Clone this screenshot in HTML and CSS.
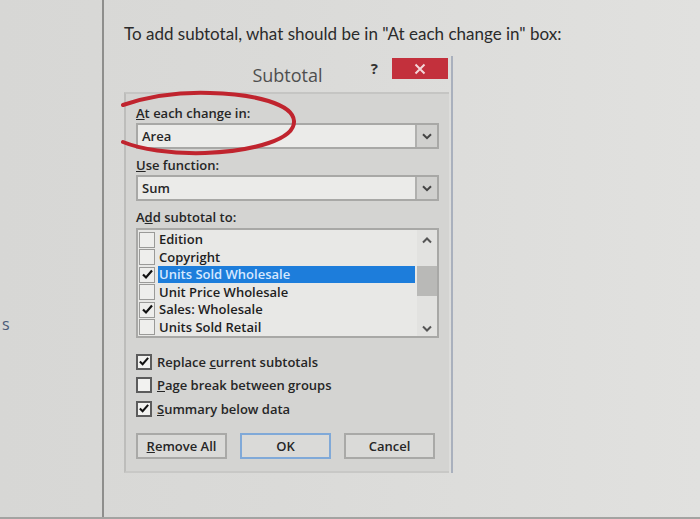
FILE: index.html
```html
<!DOCTYPE html>
<html>
<head>
<meta charset="utf-8">
<link rel="stylesheet" href="styles.css">
</head>
<body>
<div class="page">
  <div class="leftcol"><span class="s-letter">s</span></div>
  <div class="divider"></div>
  <div class="main">
    <p class="question">To add subtotal, what should be in "At each change in" box:</p>
    <div class="dialog">
      <div class="titlebar">
        <div></div>
        <div class="title">Subtotal</div>
        <div class="tb-right">
          <span class="help">?</span>
          <span class="close">
            <svg width="12" height="12" viewBox="0 0 12 12"><path d="M1.5 1.5 L10.5 10.5 M10.5 1.5 L1.5 10.5" stroke="#f4d6d8" stroke-width="2"/></svg>
          </span>
        </div>
      </div>
      <div class="panel">
        <div class="label"><u>A</u>t each change in:</div>
        <div class="combo">
          <span class="combo-text">Area</span>
          <span class="combo-btn"><svg width="10" height="7" viewBox="0 0 10 7"><path d="M1 1.2 L5 5.2 L9 1.2" fill="none" stroke="#444" stroke-width="2"/></svg></span>
        </div>
        <div class="label"><u>U</u>se function:</div>
        <div class="combo">
          <span class="combo-text">Sum</span>
          <span class="combo-btn"><svg width="10" height="7" viewBox="0 0 10 7"><path d="M1 1.2 L5 5.2 L9 1.2" fill="none" stroke="#444" stroke-width="2"/></svg></span>
        </div>
        <div class="label">A<u>d</u>d subtotal to:</div>
        <div class="listbox">
          <div class="list-items">
            <div class="item"><span class="lcb"></span><span class="itext">Edition</span></div>
            <div class="item"><span class="lcb"></span><span class="itext">Copyright</span></div>
            <div class="item sel"><span class="lcb"><svg width="13" height="11" viewBox="0 0 13 11"><path d="M2 5.5 L5 8.5 L11 1.5" fill="none" stroke="#111" stroke-width="2.2"/></svg></span><span class="itext">Units Sold Wholesale</span></div>
            <div class="item"><span class="lcb"></span><span class="itext">Unit Price Wholesale</span></div>
            <div class="item"><span class="lcb"><svg width="13" height="11" viewBox="0 0 13 11"><path d="M2 5.5 L5 8.5 L11 1.5" fill="none" stroke="#111" stroke-width="2.2"/></svg></span><span class="itext">Sales: Wholesale</span></div>
            <div class="item"><span class="lcb"></span><span class="itext">Units Sold Retail</span></div>
          </div>
          <div class="scrollbar">
            <svg class="arrow" width="10" height="7" viewBox="0 0 10 7"><path d="M1 5.5 L5 1.5 L9 5.5" fill="none" stroke="#555" stroke-width="2"/></svg>
            <div class="track"><div class="thumb"></div></div>
            <svg class="arrow" width="10" height="7" viewBox="0 0 10 7"><path d="M1 1.5 L5 5.5 L9 1.5" fill="none" stroke="#555" stroke-width="2"/></svg>
          </div>
        </div>
        <div class="options">
          <div class="opt"><span class="cb"><svg width="13" height="11" viewBox="0 0 13 11"><path d="M2 5.5 L5 8.5 L11 1.5" fill="none" stroke="#111" stroke-width="2.2"/></svg></span><span>Replace <u>c</u>urrent subtotals</span></div>
          <div class="opt"><span class="cb"></span><span><u>P</u>age break between groups</span></div>
          <div class="opt"><span class="cb"><svg width="13" height="11" viewBox="0 0 13 11"><path d="M2 5.5 L5 8.5 L11 1.5" fill="none" stroke="#111" stroke-width="2.2"/></svg></span><span><u>S</u>ummary below data</span></div>
        </div>
        <div class="buttons">
          <button class="btn"><u>R</u>emove All</button>
          <button class="btn ok">OK</button>
          <button class="btn">Cancel</button>
        </div>
      </div>
    </div>
  </div>
  <svg class="ink" width="700" height="519" viewBox="0 0 700 519">
    <path d="M123 105 C 150 96, 180 92, 210 93 C 255 94, 293 104, 294 121 C 295 139, 255 151, 205 153 C 170 154, 140 149, 123 142" fill="none" stroke="#c0242e" stroke-width="4" stroke-linecap="round"/>
  </svg>
</div>
</body>
</html>
```
FILE: styles.css
```css
html, body {
  margin: 0;
  padding: 0;
}
body {
  background: #dcdcda;
  width: 700px;
  height: 519px;
  overflow: hidden;
}
.page {
  position: relative;
  display: flex;
  width: 700px;
  height: 517px;
  border-bottom: 2px solid #a3a3a1;
  background: linear-gradient(90deg, #d7d7d5 0%, #dadad8 40%, #e1e1df 100%);
}
.leftcol {
  width: 102px;
  padding-top: 313px;
  padding-left: 2px;
  box-sizing: border-box;
}
.s-letter {
  font-family: "Open Sans", sans-serif;
  font-size: 16px;
  color: #4a5a78;
}
.divider {
  width: 2px;
  background: #8e8e8c;
}
.main {
  padding-left: 20px;
  padding-top: 22px;
}
.question {
  margin: 0;
  font-family: Lato, sans-serif;
  font-size: 17px;
  line-height: 24px;
  color: #2b2b2b;
}
.dialog {
  margin-top: 10px;
  width: 327px;
  border-right: 2px solid #a9b0bd;
  font-family: "Open Sans", sans-serif;
  font-size: 13px;
  font-weight: 600;
  color: #262626;
}
.titlebar {
  display: grid;
  grid-template-columns: 1fr auto 1fr;
  align-items: center;
  height: 36px;
}
.title {
  font-family: "Open Sans", sans-serif;
  font-size: 18px;
  font-weight: 400;
  color: #4e4e4e;
  padding-top: 2px;
}
.tb-right {
  display: flex;
  justify-content: flex-end;
  align-items: flex-start;
  height: 36px;
  padding-top: 2px;
  box-sizing: border-box;
}
.help {
  font-weight: bold;
  font-size: 15px;
  color: #333;
  margin-right: 14px;
  line-height: 20px;
}
.close {
  width: 56px;
  height: 21px;
  background: #c3303c;
  display: flex;
  align-items: center;
  justify-content: center;
  margin-right: 3px;
}
.panel {
  background: #d4d4d2;
  border-top: 2px solid #c5c5c3;
  border-left: 2px solid #bdbdbb;
  border-bottom: 2px solid #c8c8c6;
  padding: 11px 10px 12px 10px;
  margin-right: 2px;
}
.label {
  line-height: 17px;
  height: 18px;
}
.combo {
  display: flex;
  height: 26px;
  border: 2px solid #a8a8a6;
  box-sizing: border-box;
  background: #ebebe9;
  margin-bottom: 8px;
}
.combo-text {
  flex: 1;
  padding-left: 4px;
  line-height: 22px;
}
.combo-btn {
  width: 20px;
  border-left: 2px solid #b0b0ae;
  background: #d0d0ce;
  display: flex;
  align-items: center;
  justify-content: center;
}
.listbox {
  display: flex;
  height: 110px;
  border: 2px solid #a8a8a6;
  box-sizing: border-box;
  background: #e8e8e6;
  margin-top: 1px;
}
.list-items {
  flex: 1;
  padding-top: 1px;
  padding-left: 1px;
}
.item {
  display: flex;
  align-items: center;
  height: 17.5px;
}
.lcb {
  width: 16px;
  height: 16px;
  border: 1px solid #9a9a98;
  box-sizing: border-box;
  background: #eeeeec;
  display: flex;
  align-items: center;
  justify-content: center;
  margin-right: 3px;
}
.itext {
  flex: 1;
  line-height: 17px;
  padding-left: 1px;
  color: #1e1e1e;
}
.item.sel .itext {
  background: #1d7ddb;
  color: #d6e8ff;
  margin-right: 2px;
}
.scrollbar {
  width: 20px;
  display: flex;
  flex-direction: column;
  align-items: center;
  background: #e2e2e0;
  padding: 7px 0 4px;
  box-sizing: border-box;
}
.arrow {
  flex: none;
}
.track {
  flex: 1;
  width: 100%;
  padding-top: 22px;
  box-sizing: border-box;
}
.thumb {
  height: 30px;
  background: #b9b9b7;
}
.options {
  padding-top: 12px;
}
.opt {
  display: flex;
  align-items: center;
  height: 23.5px;
}
.cb {
  width: 16px;
  height: 16px;
  border: 2px solid #5c5c5c;
  box-sizing: border-box;
  background: #f2f2f0;
  display: flex;
  align-items: center;
  justify-content: center;
  margin-right: 5px;
}
.buttons {
  display: flex;
  gap: 13px;
  padding-top: 12px;
}
.btn {
  width: 91px;
  height: 26px;
  border: 2px solid #a9a9a7;
  background: #dadad8;
  font-family: "Open Sans", sans-serif;
  font-size: 13px;
  font-weight: 600;
  color: #262626;
  padding: 0;
}
.btn.ok {
  border-color: #80a9d8;
}
.ink {
  position: absolute;
  left: 0;
  top: 0;
  pointer-events: none;
}
```
